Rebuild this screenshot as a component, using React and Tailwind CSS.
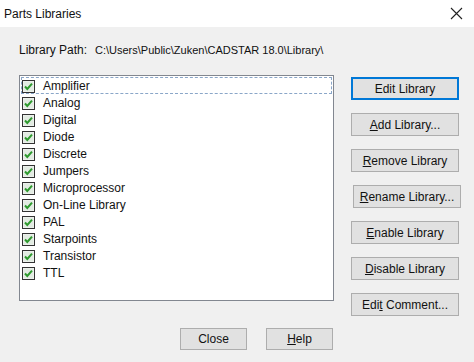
import React from 'react';

const items = [
  'Amplifier',
  'Analog',
  'Digital',
  'Diode',
  'Discrete',
  'Jumpers',
  'Microprocessor',
  'On-Line Library',
  'PAL',
  'Starpoints',
  'Transistor',
  'TTL',
];

function Check() {
  return (
    <svg width="13" height="13" viewBox="0 0 13 13" className="shrink-0">
      <rect x="0.5" y="0.5" width="12" height="12" fill="#f4f4f4" stroke="#333" />
      <rect x="1.5" y="1.5" width="10" height="10" fill="#e2ebe2" />
      <path d="M3 6.5 L5.3 9 L10 3.6" fill="none" stroke="#2e9a2e" strokeWidth="2" />
    </svg>
  );
}

function Btn({ children, primary, className = '' }) {
  return (
    <div
      className={`flex h-[23px] w-[108px] items-center justify-center bg-[#e1e1e1] text-[12px] text-[#111] ${
        primary ? 'border-2 border-[#0078d7]' : 'border border-[#adadad]'
      } ${className}`}
    >
      {children}
    </div>
  );
}

export default function App() {
  return (
    <div
      className="flex h-[362px] w-[474px] flex-col overflow-hidden bg-[#f0f0f0] text-[#111]"
      style={{ fontFamily: '"Liberation Sans", Arial, sans-serif' }}
    >
      <div className="flex h-[27px] shrink-0 items-center justify-between bg-white pl-[4px] pr-[11px]">
        <span className="text-[12px]">Parts Libraries</span>
        <svg width="13" height="13" viewBox="0 0 13 13">
          <path d="M1 1 L12 12 M12 1 L1 12" stroke="#222" strokeWidth="1.1" />
        </svg>
      </div>

      <div className="flex flex-1 flex-col pl-[19px] pt-[16px]">
        <div className="flex h-[14px] items-center">
          <span className="w-[76px] text-[12px]">Library Path:</span>
          <span className="text-[11px]">C:\Users\Public\Zuken\CADSTAR 18.0\Library\</span>
        </div>

        <div className="mt-[18px] flex">
          <div className="h-[226px] w-[315px] border border-[#828790] bg-white px-[1px] pt-[1px]">
            {items.map((name, i) => (
              <div
                key={name}
                className={`flex h-[17px] items-center gap-[8px] pl-[1px] pt-[1px] text-[12px] ${
                  i === 0 ? 'outline outline-1 -outline-offset-1 outline-dashed outline-[#8aa6c8]' : ''
                }`}
              >
                <Check />
                <span>{name}</span>
              </div>
            ))}
          </div>

          <div className="ml-[17px] flex flex-col gap-[13px] pt-[2px]">
            <Btn primary>Edit Library</Btn>
            <Btn>
              <span><u>A</u>dd Library...</span>
            </Btn>
            <Btn>
              <span><u>R</u>emove Library</span>
            </Btn>
            <Btn className="ml-[2px]">
              <span><u>R</u>ename Library...</span>
            </Btn>
            <Btn>
              <span><u>E</u>nable Library</span>
            </Btn>
            <Btn>
              <span><u>D</u>isable Library</span>
            </Btn>
            <Btn>
              <span>Edi<u>t</u> Comment...</span>
            </Btn>
          </div>
        </div>

        <div className="mt-[12px] flex gap-[19px] pl-[161px]">
          <div className="flex h-[22px] w-[67px] items-center justify-center border border-[#adadad] bg-[#e1e1e1] text-[12px]">
            Close
          </div>
          <div className="flex h-[22px] w-[67px] items-center justify-center border border-[#adadad] bg-[#e1e1e1] text-[12px]">
            <span><u>H</u>elp</span>
          </div>
        </div>
      </div>
    </div>
  );
}
